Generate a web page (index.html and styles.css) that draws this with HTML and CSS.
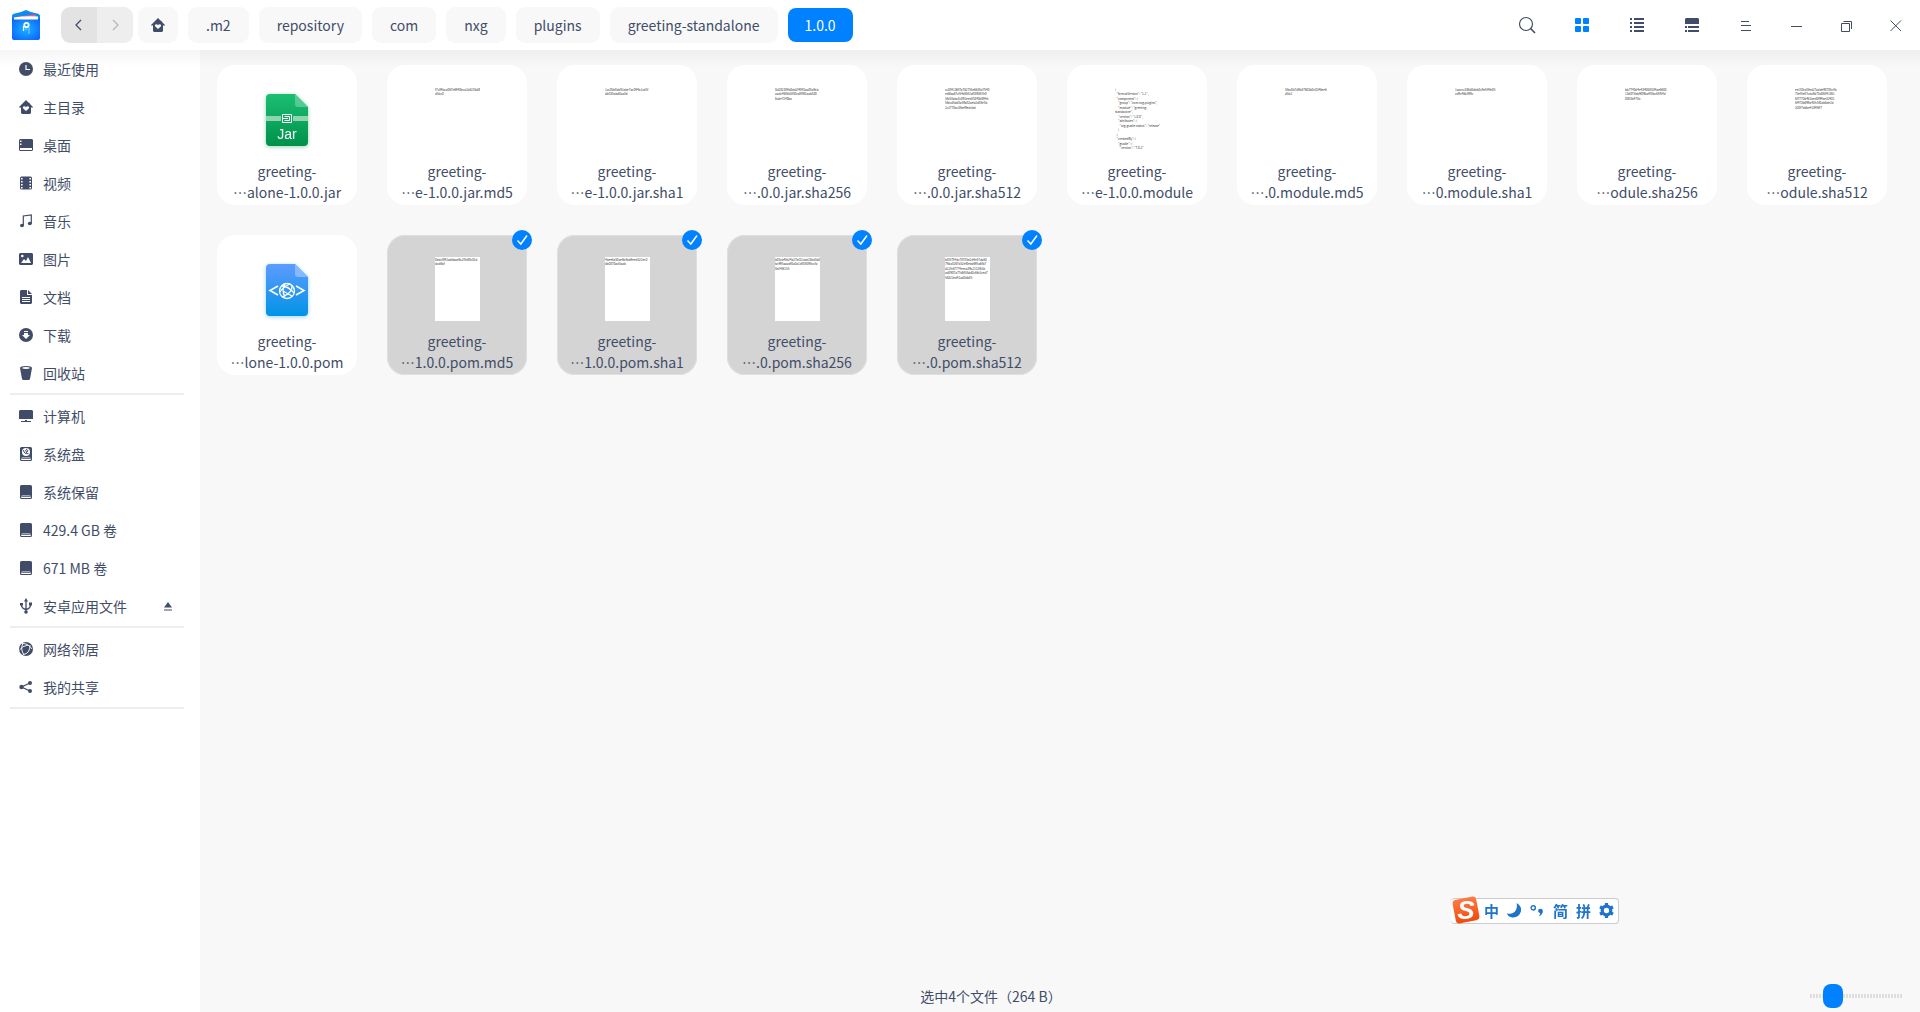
FILE: index.html
```html
<!DOCTYPE html>
<html lang="zh-CN">

<head>
    <meta charset="UTF-8">
    <meta name="viewport" content="width=device-width, initial-scale=1.0">
    <title>1.0.0</title>
    <link rel="stylesheet" href="styles.css">
</head>

<body>
    <!-- shared icons -->
    <svg class="defs" width="0" height="0" aria-hidden="true">
        <defs>
            <linearGradient id="jarFill" x1="0" y1="0" x2="0" y2="1">
                <stop offset="0" stop-color="#1bbf74" />
                <stop offset="1" stop-color="#00914a" />
            </linearGradient>
            <linearGradient id="pomFill" x1="0" y1="0" x2="0" y2="1">
                <stop offset="0" stop-color="#5e9bff" />
                <stop offset="1" stop-color="#0094e6" />
            </linearGradient>
            <radialGradient id="logoFill" cx="0.5" cy="0.5" r="0.7">
                <stop offset="0" stop-color="#1ab4ff" />
                <stop offset="1" stop-color="#0a5cff" />
            </radialGradient>
            <linearGradient id="imeFill" x1="0" y1="0" x2="0" y2="1">
                <stop offset="0" stop-color="#ff7a45" />
                <stop offset="1" stop-color="#f04a0c" />
            </linearGradient>
        </defs>
        <symbol id="home" viewBox="0 0 14 14">
            <path fill-rule="evenodd" d="M7 0L10 3V2.500L11.500 4.500L14 7V7.500H12V13L11 14H3L2 13V7.500H0V7ZM7 11L10 8.200C10.800 6.600 8.600 5.200 7 7C5.400 5.200 3.200 6.600 4 8.200Z" />
        </symbol>
        <symbol id="disk" viewBox="0 0 14 14">
            <path fill-rule="evenodd" d="M2.500 0H11.500Q13 0 13 1.500V12.500Q13 14 11.500 14H2.500Q1 14 1 12.500V1.500Q1 0 2.500 0ZM2 10V12Q2 13 3 13H11Q12 13 12 12V10L11.500 12H2.500ZM3 10.500V11.200H11V10.500Z" />
        </symbol>
        <symbol id="check" viewBox="0 0 20 20">
            <circle cx="10" cy="10" r="10" fill="#0081ff" />
            <path d="M5.500 10.500L8.800 14L15 5.500" fill="none" stroke="#fff" stroke-width="1.500" />
        </symbol>
    </svg>

    <header class="titlebar">
        <svg class="logo" viewBox="0 0 28 30">
            <path d="M0 9V6Q0 4 3 3.500Q9 2.500 14 0Q19 2.500 25 3.500Q28 4 28 6V14H0Z" fill="#0c8cf0" />
            <path d="M3 7L23 4.500L25 8H3Z" fill="#ff5a79" />
            <path d="M2 7.500Q14 5.500 26 6.500V12H2Z" fill="#fff" />
            <path d="M0 8L2 9.500H26L28 8V28Q28 30 26 30H2Q0 30 0 28Z" fill="url(#logoFill)" />
            <circle cx="14.500" cy="15" r="2.200" fill="none" stroke="#fff" stroke-width="1.800" />
            <path d="M11.500 16V21" fill="none" stroke="#fff" stroke-width="1.200" />
            <path d="M14 18V20M17 17V24" fill="none" stroke="#7cc4ff" stroke-width="1.200" />
        </svg>

        <div class="history">
            <button type="button" class="back" aria-label="后退">
                <svg viewBox="0 0 36 36"><path d="M20 13L15 18L20 23" /></svg>
            </button>
            <button type="button" class="forward" aria-label="前进" disabled>
                <svg viewBox="0 0 36 36"><path d="M16 13L21 18L16 23" /></svg>
            </button>
        </div>

        <nav class="crumbs">
            <button type="button" class="crumb home" aria-label="主目录"><svg class="icon"><use href="#home" /></svg></button>
            <button type="button" class="crumb">.m2</button>
            <button type="button" class="crumb">repository</button>
            <button type="button" class="crumb">com</button>
            <button type="button" class="crumb">nxg</button>
            <button type="button" class="crumb">plugins</button>
            <button type="button" class="crumb">greeting-standalone</button>
            <button type="button" class="crumb current">1.0.0</button>
        </nav>

        <div class="views">
            <button type="button" aria-label="搜索">
                <svg class="search" viewBox="0 0 18 18"><circle cx="8" cy="8" r="6.500" /><path d="M12.500 12.500L17 17" stroke-width="1.600" /></svg>
            </button>
            <button type="button" class="on" aria-label="图标视图">
                <svg width="14" height="14" viewBox="0 0 14 14"><rect width="6" height="6" rx="1" /><rect x="8" width="6" height="6" rx="1" /><rect y="8" width="6" height="6" rx="1" /><rect x="8" y="8" width="6" height="6" rx="1" /></svg>
            </button>
            <button type="button" aria-label="列表视图">
                <svg width="14" height="14" viewBox="0 0 14 14"><path d="M0 0H2V2H0ZM4 0H14V2H4ZM0 4H2V6H0ZM4 4H14V6H4ZM0 8H2V10H0ZM4 8H14V10H4ZM0 12H2V14H0ZM4 12H14V14H4Z" /></svg>
            </button>
            <button type="button" aria-label="分组视图">
                <svg width="14" height="14" viewBox="0 0 14 14"><path d="M1 0H13L14 1V6H0V1ZM0 8H2V10H0ZM3 8H14V10H3ZM0 12H2V14H0ZM3 12H14V14H3Z" /></svg>
            </button>
        </div>
        <div class="window-buttons">
            <button type="button" aria-label="菜单">
                <svg viewBox="0 0 14 14"><path d="M3 3.500H11M3 7.500H13M3 12.500H13" /></svg>
            </button>
            <button type="button" aria-label="最小化">
                <svg viewBox="0 0 14 14"><path d="M3 8.500H14" /></svg>
            </button>
            <button type="button" aria-label="还原">
                <svg viewBox="0 0 14 14"><path d="M3.500 5.500H11.500V13.500H3.500ZM5.500 3.500H13.500V11" /></svg>
            </button>
            <button type="button" aria-label="关闭">
                <svg viewBox="0 0 14 14"><path d="M2.500 2.500L13 13M13 2.500L2.500 13" /></svg>
            </button>
        </div>
    </header>

    <div class="body">
        <aside class="sidebar">
            <a href="#" class="place"><svg class="icon" viewBox="0 0 14 14"><circle cx="7" cy="7" r="7" /><path d="M7 3V7.500H11" fill="none" stroke="#fff" stroke-width="1.200" /></svg>最近使用</a>
            <a href="#" class="place"><svg class="icon"><use href="#home" /></svg>主目录</a>
            <a href="#" class="place"><svg class="icon" viewBox="0 0 14 14"><path fill-rule="evenodd" d="M1 1H13L14 2V12L13 13H1L0 12V2ZM1 10V12H13V10ZM1 2.500V4H2.500V2.500ZM1 5.500V7H2.500V5.500Z" /></svg>桌面</a>
            <a href="#" class="place"><svg class="icon" viewBox="0 0 14 14"><rect x="1" y="0.500" width="12" height="13" rx="1.500" /><path d="M2.800 2V13M11.200 2V13" fill="none" stroke="#fff" stroke-width="1.600" stroke-dasharray="1.600 1.400" /></svg>视频</a>
            <a href="#" class="place"><svg class="icon" viewBox="0 0 14 14"><ellipse cx="3" cy="11.500" rx="2" ry="1.700" /><ellipse cx="10.800" cy="9.500" rx="2" ry="1.700" /><path d="M4.300 11.500V2L12.300 1V9.500" fill="none" stroke="#414d68" stroke-width="1.200" /></svg>音乐</a>
            <a href="#" class="place"><svg class="icon" viewBox="0 0 14 14"><path fill-rule="evenodd" d="M1 1H13L14 2V12L13 13H1L0 12V2ZM2 11H12L9 5L7 9L5 7ZM2 4A1.300 1.300 0 1 0 4.600 4A1.300 1.300 0 1 0 2 4Z" /></svg>图片</a>
            <a href="#" class="place"><svg class="icon" viewBox="0 0 14 14"><path fill-rule="evenodd" d="M2 0H8V5H13V13L12 14H2L1 13V1ZM3 7V8H11V7ZM3 9V10H11V9ZM3 11V12H11V11ZM9 0L13 4H9Z" /></svg>文档</a>
            <a href="#" class="place"><svg class="icon" viewBox="0 0 14 14"><circle cx="7" cy="7" r="7" /><path d="M5 3H9V4H5ZM5 5H9V7H11L7 11L3 7H5Z" fill="#fff" /></svg>下载</a>
            <a href="#" class="place"><svg class="icon" viewBox="0 0 14 14"><path fill-rule="evenodd" d="M1 2Q1 0 7 0Q13 0 13 2L11 13Q10.500 14 9.500 14H4.500Q3.500 14 3 13ZM2.500 2Q7 3.800 11.500 2Q7 0.200 2.500 2Z" /></svg>回收站</a>
            <hr>
            <a href="#" class="place"><svg class="icon" viewBox="0 0 14 14"><path d="M1 1H13L14 2V10H0V2ZM6 10H8V12H12V13H2V12H6Z" /><path d="M0 10.500H14" stroke="#fff" /></svg>计算机</a>
            <a href="#" class="place"><svg class="icon" viewBox="0 0 14 14"><use href="#disk" /><circle cx="7" cy="5" r="4" fill="#fff" /><path d="M4.500 3Q5 7.500 9.500 6.500M7 2Q10.500 3.500 7 6M6 3.500L8 4.500" fill="none" stroke="#414d68" /></svg>系统盘</a>
            <a href="#" class="place"><svg class="icon"><use href="#disk" /></svg>系统保留</a>
            <a href="#" class="place"><svg class="icon"><use href="#disk" /></svg>429.4 GB 卷</a>
            <a href="#" class="place"><svg class="icon"><use href="#disk" /></svg>671 MB 卷</a>
            <div class="place">
                <a href="#"><svg class="icon" viewBox="0 0 14 14"><path d="M7 -1L9 2.500H5ZM1 4H4V6.500H1ZM10 3.500H13V6.500H10Z" /><circle cx="7" cy="13" r="1.800" /><path d="M7 2V12M2.500 6Q2.500 9.500 7 10.500Q11.500 9.500 11.500 6" fill="none" stroke="#414d68" stroke-width="1.300" /></svg>安卓应用文件</a>
                <button type="button" class="eject" aria-label="弹出"><svg viewBox="0 0 8 9"><path d="M4 0L8 5.500H0ZM0 7.500H8V8.500H0Z" /></svg></button>
            </div>
            <hr>
            <a href="#" class="place"><svg class="icon" viewBox="0 0 14 14"><circle cx="7" cy="7" r="7" /><path d="M3 1.500Q9 1 13 7M4 1Q1 7 5 13M4 12.500Q11 12 11 3M0.500 8Q3 4 9 3" fill="none" stroke="#fff" stroke-width="0.900" /></svg>网络邻居</a>
            <a href="#" class="place"><svg class="icon" viewBox="0 0 14 14"><circle cx="2.500" cy="7" r="2.200" /><circle cx="11" cy="3" r="2" /><circle cx="11" cy="11" r="2" /><path d="M11 3L2.500 7L11 11" fill="none" stroke="#414d68" stroke-width="1.300" /></svg>我的共享</a>
            <hr>
        </aside>

        <main class="content">
            <div class="files">
                <button type="button" class="file">
                    <svg class="type-icon jar" viewBox="0 0 42 52">
                        <path d="M4 0H29L42 13V48Q42 52 38 52H4Q0 52 0 48V4Q0 0 4 0Z" fill="url(#jarFill)" />
                        <path d="M29 0L42 13H32Q29 13 29 10Z" fill="#6fd3a3" opacity="0.700" />
                        <path d="M0 22H15V27H0ZM27 22H42V27H27Z" fill="#8fd3b1" />
                        <path d="M16.500 20.500H25.500V28.500H16.500V20.500M17 24.500H22M18.500 22.500H23.500V26.500H18.500" fill="none" stroke="#fff" />
                        <text x="21" y="45" fill="#fff" font-size="14" text-anchor="middle">Jar</text>
                    </svg>
                    <span class="name">greeting-<br>…alone-1.0.0.jar</span>
                </button>
                <button type="button" class="file">
                    <svg class="thumb" viewBox="0 0 90 128"><text><tspan x="0" y="7">f7c04bca067e6940bca1b6235d0f</tspan><tspan x="0" y="16">d5bc0</tspan></text></svg>
                    <span class="name">greeting-<br>…e-1.0.0.jar.md5</span>
                </button>
                <button type="button" class="file">
                    <svg class="thumb" viewBox="0 0 90 128"><text><tspan x="0" y="7">1cc05b8bb91abe7ac044b1cd5f</tspan><tspan x="0" y="16">db055abd0aa8d</tspan></text></svg>
                    <span class="name">greeting-<br>…e-1.0.0.jar.sha1</span>
                </button>
                <button type="button" class="file">
                    <svg class="thumb" viewBox="0 0 90 128"><text><tspan x="0" y="7">0d202304b0dd2f4892aa05a9cb</tspan><tspan x="0" y="16">aadc4686b5f50cd8f9f2aab830</tspan><tspan x="0" y="25">6cde7240ba</tspan></text></svg>
                    <span class="name">greeting-<br>….0.0.jar.sha256</span>
                </button>
                <button type="button" class="file">
                    <svg class="thumb" viewBox="0 0 90 128"><text><tspan x="0" y="7">cc084136f7b762755e6635d7540</tspan><tspan x="0" y="16">ed6ba67cf54d65f2af809367e0</tspan><tspan x="0" y="25">5fd58abc8c091eeb85340d094d</tspan><tspan x="0" y="34">5fdcd5bd8a59d82aeb2d88e5b</tspan><tspan x="0" y="43">2c2770ac3fbef9edcbd</tspan></text></svg>
                    <span class="name">greeting-<br>….0.0.jar.sha512</span>
                </button>
                <button type="button" class="file">
                    <svg class="thumb" viewBox="0 0 90 128"><text><tspan x="0" y="7">{</tspan><tspan x="3" y="16">"formatVersion": "1.1",</tspan><tspan x="3" y="25">"component": {</tspan><tspan x="6" y="34">"group": "com.nxg.plugins",</tspan><tspan x="6" y="43">"module": "greeting-</tspan><tspan x="0" y="52">standalone",</tspan><tspan x="6" y="61">"version": "1.0.0",</tspan><tspan x="6" y="70">"attributes": {</tspan><tspan x="9" y="79">"org.gradle.status": "release"</tspan><tspan x="6" y="88">}</tspan><tspan x="3" y="97">},</tspan><tspan x="3" y="106">"createdBy": {</tspan><tspan x="6" y="115">"gradle": {</tspan><tspan x="9" y="124">"version": "7.0.2"</tspan></text></svg>
                    <span class="name">greeting-<br>…e-1.0.0.module</span>
                </button>
                <button type="button" class="file">
                    <svg class="thumb" viewBox="0 0 90 128"><text><tspan x="0" y="7">5fbc0b7d9b37603b0c0246ee6</tspan><tspan x="0" y="16">d5b2</tspan></text></svg>
                    <span class="name">greeting-<br>….0.module.md5</span>
                </button>
                <button type="button" class="file">
                    <svg class="thumb" viewBox="0 0 90 128"><text><tspan x="0" y="7">1aaccc336d0dbb0c9e5f4fe05</tspan><tspan x="0" y="16">cd9c46b599c</tspan></text></svg>
                    <span class="name">greeting-<br>…0.module.sha1</span>
                </button>
                <button type="button" class="file">
                    <svg class="thumb" viewBox="0 0 90 128"><text><tspan x="0" y="7">bb7740d4e434068f204ae6603</tspan><tspan x="0" y="16">13d075bb9f09ba48fbc68f54d</tspan><tspan x="0" y="25">0083b475b</tspan></text></svg>
                    <span class="name">greeting-<br>…odule.sha256</span>
                </button>
                <button type="button" class="file">
                    <svg class="thumb" viewBox="0 0 90 128"><text><tspan x="0" y="7">ee180cd5fed27adde90705c4b</tspan><tspan x="0" y="16">75ef5e87cda9d75d06841861</tspan><tspan x="0" y="25">6f7770d461bed0f94be32401</tspan><tspan x="0" y="34">6f473b699a43fc5f0ab6de2b</tspan><tspan x="0" y="43">320f7ddbe4104f6f7</tspan></text></svg>
                    <span class="name">greeting-<br>…odule.sha512</span>
                </button>
                <button type="button" class="file">
                    <svg class="type-icon pom" viewBox="0 0 42 52">
                        <path d="M4 0H29L42 13V48Q42 52 38 52H4Q0 52 0 48V4Q0 0 4 0Z" fill="url(#pomFill)" />
                        <path d="M29 0L42 13H32Q29 13 29 10Z" fill="#94c0ff" opacity="0.800" />
                        <g fill="none" stroke="#fff" stroke-width="1.300">
                            <path d="M12 22L4 26.500L12 31M30 22L38 26.500L30 31" stroke-width="1.600" />
                            <circle cx="21" cy="27" r="7.500" />
                            <path d="M16 22Q22 22 28 29M19 20Q15 26 19 33M26 21Q27 29 16 33M14 28Q17 23 24 20M17 27L26 32" />
                        </g>
                    </svg>
                    <span class="name">greeting-<br>…lone-1.0.0.pom</span>
                </button>
                <button type="button" class="file selected" aria-pressed="true">
                    <svg class="badge"><use href="#check" /></svg>
                    <svg class="thumb" viewBox="0 0 90 128"><text><tspan x="0" y="7">0bdcf042adbbad6c2f8df0c01d</tspan><tspan x="0" y="16">dcd6bf</tspan></text></svg>
                    <span class="name">greeting-<br>…1.0.0.pom.md5</span>
                </button>
                <button type="button" class="file selected" aria-pressed="true">
                    <svg class="badge"><use href="#check" /></svg>
                    <svg class="thumb" viewBox="0 0 90 128"><text><tspan x="0" y="7">4bee6a50ae6b4ab9eed522ec0</tspan><tspan x="0" y="16">db0070ad5aab</tspan></text></svg>
                    <span class="name">greeting-<br>…1.0.0.pom.sha1</span>
                </button>
                <button type="button" class="file selected" aria-pressed="true">
                    <svg class="badge"><use href="#check" /></svg>
                    <svg class="thumb" viewBox="0 0 90 128"><text><tspan x="0" y="7">b03cb4fb24b27bf21cbd20dd5b0</tspan><tspan x="0" y="16">bc995aaadf0a0a1df58f395ccfa</tspan><tspan x="0" y="25">0e246f155</tspan></text></svg>
                    <span class="name">greeting-<br>….0.pom.sha256</span>
                </button>
                <button type="button" class="file selected" aria-pressed="true">
                    <svg class="badge"><use href="#check" /></svg>
                    <svg class="thumb" viewBox="0 0 90 128"><text><tspan x="0" y="7">b8f3784dc70785d2d4e37ab63</tspan><tspan x="0" y="16">79da8267d52ef0ebd695a6fb7</tspan><tspan x="0" y="25">d12fc67774eeca39c2212f61b</tspan><tspan x="0" y="34">ad0907a77d6f58dd0c6fd1ced7</tspan><tspan x="0" y="43">56322ed42ad0db85</tspan></text></svg>
                    <span class="name">greeting-<br>….0.pom.sha512</span>
                </button>
            </div>

            <footer class="statusbar">
                <span class="status">选中4个文件（264 B）</span>
                <input type="range" class="zoom" min="0" max="100" value="18" aria-label="图标大小">
            </footer>
        </main>
    </div>

    <!-- input method bar -->
    <div class="ime">
        <svg class="ime-logo" viewBox="0 0 30 30">
            <rect x="3" y="3" width="24" height="24" rx="4" fill="url(#imeFill)" transform="rotate(-11 15 15)" />
            <text x="15" y="24" fill="#fff" font-size="26" font-weight="700" font-style="italic" text-anchor="middle">S</text>
        </svg>
        <span>中</span>
        <svg viewBox="0 0 14 14"><path d="M9 0Q14 3 13 8Q11 14 5 13.500Q1 13 0 9.500Q4 11 7 8.500Q10 5.500 9 0Z" /></svg>
        <svg viewBox="0 0 14 14"><circle cx="3" cy="4.500" r="2" fill="none" stroke="#1f73cb" stroke-width="1.300" /><path d="M7.500 7.500A2 2 0 0 1 12 7.500Q12 11 8 12.500Q9.500 11 9.500 9.500Q7.500 9 7.500 7.500Z" /></svg>
        <span>简</span>
        <span>拼</span>
        <svg viewBox="0 0 14 14"><circle cx="7" cy="7" r="4" fill="none" stroke="#1f73cb" stroke-width="3" /><path d="M7 0V2.500M7 11.500V14M1 3.500L3 4.700M11 9.300L13 10.500M1 10.500L3 9.300M11 4.700L13 3.500" stroke="#1f73cb" stroke-width="3" /></svg>
    </div>
</body>

</html>
```
FILE: styles.css
```css
* {
    box-sizing: border-box;
}

body {
    display: flex;
    flex-direction: column;
    height: 100vh;
    margin: 0;
    font-family: "Noto Sans CJK SC", sans-serif;
    font-size: 14px;
    line-height: 21px;
    color: #414d68;
    background-color: #f8f8f8;
}

button {
    padding: 0;
    border: none;
    background: none;
    font: inherit;
    color: inherit;
    cursor: pointer;
}

a {
    color: inherit;
    text-decoration: none;
}

svg {
    display: block;
    flex: none;
}

.defs {
    position: absolute;
}

.icon {
    width: 14px;
    height: 14px;
    fill: #414d68;
    overflow: visible;
}

/* title bar */
.titlebar {
    position: relative;
    display: flex;
    align-items: center;
    height: 50px;
    padding-left: 12px;
    background-color: #fff;
}

.titlebar::after {
    content: "";
    position: absolute;
    top: 100%;
    left: 0;
    right: 0;
    height: 18px;
    background: linear-gradient(rgba(0, 0, 0, 0.035), rgba(0, 0, 0, 0));
    pointer-events: none;
}

.logo {
    width: 28px;
    height: 30px;
}

.history {
    display: flex;
    margin-left: 21px;
    border-radius: 9px;
    overflow: hidden;
}

.history button {
    width: 36px;
    height: 36px;
    background-color: #e3e3e3;
}

.history .forward {
    background-color: #eee;
}

.history svg {
    fill: none;
    stroke: #414d68;
    stroke-width: 1.3;
}

.history .forward svg {
    stroke: #b4b8c1;
}

.crumbs {
    display: flex;
    align-items: center;
    gap: 10px;
    margin-left: 5px;
}

.crumb {
    height: 36px;
    padding: 0 18px;
    border-radius: 9px;
    background-color: #f8f8f8;
}

.crumb.home {
    padding: 0 13px;
}

.crumb.current {
    height: 34px;
    padding: 0 17px;
    border-radius: 8px;
    background-color: #0081ff;
    color: #fff;
}

.views {
    display: flex;
    gap: 19px;
    margin-left: auto;
    margin-right: 10px;
}

.views button {
    display: flex;
    align-items: center;
    justify-content: center;
    width: 36px;
    height: 36px;
}

.views svg {
    fill: #414d68;
}

.views .on svg {
    fill: #0081ff;
}

.views .search {
    width: 18px;
    height: 18px;
    fill: none;
    stroke: #414d68;
    stroke-width: 1.2;
}

.window-buttons {
    display: flex;
}

.window-buttons button {
    display: flex;
    align-items: center;
    justify-content: center;
    width: 50px;
    height: 50px;
}

.window-buttons svg {
    width: 14px;
    height: 14px;
    fill: none;
    stroke: #414d68;
}

.body {
    display: flex;
    flex: 1;
    min-height: 0;
}

/* sidebar */
.sidebar {
    width: 200px;
    background-color: #fff;
}

.place {
    display: flex;
    align-items: center;
    gap: 10px;
    height: 38px;
    padding-left: 19px;
}

.place a {
    display: flex;
    align-items: center;
    gap: 10px;
}

.eject {
    margin-left: auto;
    margin-right: 28px;
}

.eject svg {
    width: 8px;
    height: 9px;
    fill: #414d68;
}

.sidebar hr {
    height: 2px;
    margin: 1px 16px 2px 10px;
    border: none;
    background-color: #eee;
}

/* files */
.content {
    display: flex;
    flex: 1;
    flex-direction: column;
}

.files {
    display: grid;
    flex: 1;
    grid-template-columns: repeat(auto-fill, 140px);
    align-content: start;
    gap: 30px;
    padding: 15px 17px 0;
}

.file {
    position: relative;
    display: flex;
    flex-direction: column;
    align-items: center;
    height: 140px;
    padding-top: 22px;
    border-radius: 18px;
    background-color: #fff;
}

.file.selected {
    background-color: #d4d4d4;
    box-shadow: inset 0 0 0 1px #dfdfdf;
}

.thumb {
    width: 45px;
    height: 64px;
    margin-bottom: 10px;
    background-color: #fff;
}

.thumb text {
    font-size: 6px;
    fill: #333;
}

.type-icon {
    width: 42px;
    height: 52px;
    margin: 7px 0 15px;
    overflow: visible;
}

.type-icon text {
    font-family: "Liberation Sans", Arial, sans-serif;
}

.type-icon.jar {
    filter: drop-shadow(0 1px 2px rgba(0, 145, 74, 0.4));
}

.type-icon.pom {
    filter: drop-shadow(0 1px 2px rgba(0, 148, 230, 0.4));
}

.badge {
    position: absolute;
    top: -5px;
    right: -5px;
    width: 20px;
    height: 20px;
}

/* status bar */
.statusbar {
    display: flex;
    align-items: center;
    height: 32px;
    padding-right: 18px;
}

.status {
    flex: 1;
    text-align: center;
}

.zoom {
    width: 92px;
    height: 24px;
    margin: 0 0 0 28px;
    appearance: none;
    background: repeating-linear-gradient(90deg, #dedede 0 2px, transparent 2px 3px) center / 100% 4px no-repeat;
}

.zoom::-webkit-slider-thumb {
    appearance: none;
    width: 20px;
    height: 24px;
    border-radius: 8px;
    background-color: #0081ff;
}

/* input method bar floats over the window */
.ime {
    position: fixed;
    right: 301px;
    bottom: 88px;
    display: flex;
    align-items: center;
    gap: 8px;
    height: 26px;
    padding: 0 4px 2px 0;
    border: 1px solid #ccc;
    border-left: none;
    border-radius: 4px;
    background-color: #fff;
    color: #1f73cb;
    font-size: 15px;
    font-weight: 700;
}

.ime svg {
    width: 15px;
    height: 15px;
    fill: #1f73cb;
}

.ime .ime-logo {
    width: 30px;
    height: 30px;
    margin-right: -5px;
}

.ime-logo text {
    font-family: "Liberation Sans", Arial, sans-serif;
}
```
